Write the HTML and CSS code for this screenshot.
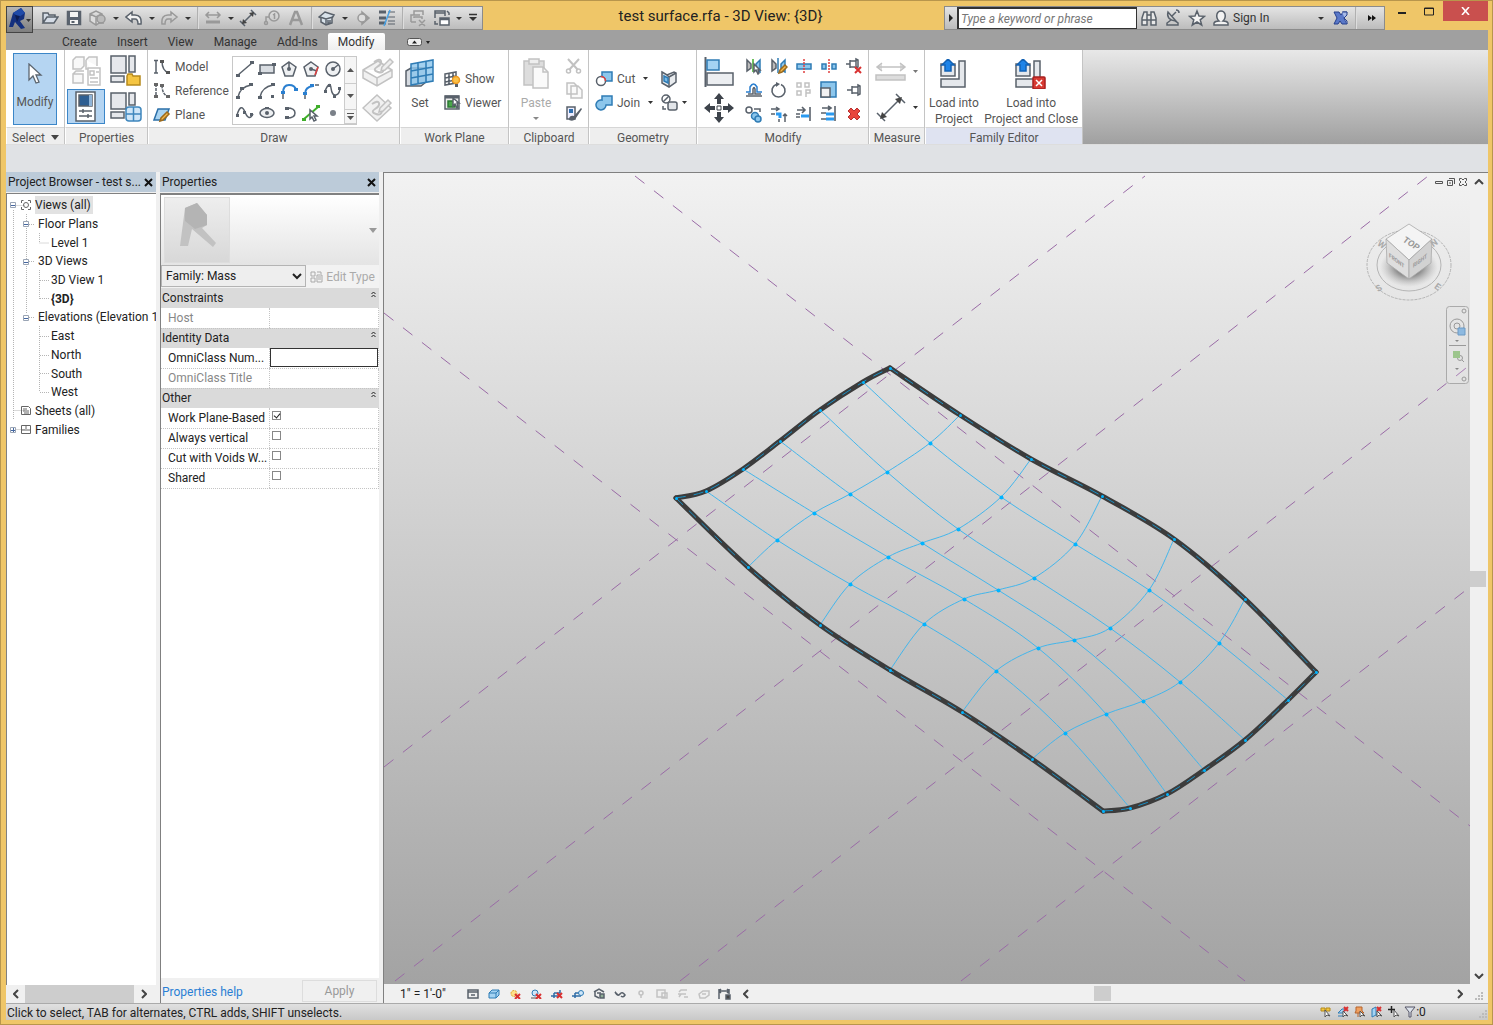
FILE: index.html
```html
<!DOCTYPE html>
<html lang="en">
<head>
<meta charset="utf-8">
<title>test surface.rfa - 3D View: {3D}</title>
<link rel="stylesheet" href="styles.css">
</head>
<body>
<div class="window">

<header class="titlebar">
  <button class="app-button" aria-label="Application menu">
    <svg width="27" height="26" viewBox="0 0 27 26"><path d="M3 20 7 6l8-5 4 5-1 6-4 2 5 7-4 1-6-7-2 5z" fill="#14307e"/><path d="M7 6l8-5 4 5-6 4z" fill="#1f4aa8"/><path d="M9 8l5 1-3 6z" fill="#0c1c52"/><path d="M20 12h5l-2.500 3z" fill="#333"/></svg>
  </button>
  <nav class="quick" aria-label="Quick access">
    <button aria-label="Open"><svg class="i" width="18" height="16"><path d="M2 13V3h5l1 2h6v2M2 13l4-6h11l-4 6z" fill="#d5dce6"/></svg></button>
    <button aria-label="Save"><svg class="i" width="16" height="16"><path d="M1.500 1.500h13v13h-13z" fill="#5b6470"/><path d="M4 2h8v5H4zM4 10h8v4H4z" fill="#f4f4f4" stroke="none"/><path d="M5.500 12h3" stroke-width="2"/></svg></button>
    <button aria-label="Synchronize"><svg class="i dim" width="18" height="16"><path d="M1 4l6-3 6 3v7l-6 4-6-4zM1 4l6 3 6-3M7 7v8" fill="#ddd"/><circle cx="12" cy="9" r="4" fill="#bbb"/><path d="M9 13h6"/></svg></button>
    <button class="caret" aria-label="Sync options"></button>
    <button aria-label="Undo"><svg class="i" width="18" height="16"><path d="M7 2 1 7l6 5V9h3q3 0 3 5h3q1-9-6-9H7z" fill="#f2f2f2"/></svg></button>
    <button class="caret" aria-label="Undo list"></button>
    <button aria-label="Redo"><svg class="i dim" width="18" height="16"><path d="M10 2l6 5-6 5V9H7q-3 0-3 5H1Q0 5 7 5h3z"/></svg></button>
    <button class="caret" aria-label="Redo list"></button>
    <i class="sep"></i>
    <button aria-label="Measure"><svg class="i dim" width="18" height="14"><path d="M2 4h14M5 1 2 4l3 3M13 1l3 3-3 3"/><path d="M2 11h14" stroke-width="3"/></svg></button>
    <button class="caret" aria-label="Measure options"></button>
    <button aria-label="Aligned dimension"><svg class="i" width="18" height="18"><path d="M3 15 15 3M1 12l5 5M12 1l5 5"/><path d="M3 15l1-5 4 4zM15 3l-5 1 4 4z" fill="#444" stroke="none"/></svg></button>
    <button aria-label="Tag"><svg class="i dim" width="18" height="16"><circle cx="11" cy="6" r="5"/><path d="M10 5l1.500-1v5M6 7H3v5"/><circle cx="3" cy="13" r="1.500"/></svg></button>
    <button aria-label="Text"><svg class="i dim" width="16" height="16"><path d="M2 15 7 2h2l5 13M4 10h8" stroke-width="2.500"/></svg></button>
    <i class="sep"></i>
    <button aria-label="Default 3D view"><svg class="i" width="18" height="16"><path d="M1 7l6-5 9 3-2 3v5l-6 2-5-3V8z" fill="#d8e2ea"/><path d="M2 7l6 2 7-2M8 9v6M10 10v4l2-1v-3"/></svg></button>
    <button class="caret" aria-label="3D view options"></button>
    <button aria-label="Section"><svg class="i dim" width="16" height="16"><path d="M7 2l7 6-7 6z" fill="#999"/><circle cx="7" cy="8" r="4" fill="#ddd"/></svg></button>
    <button aria-label="Thin lines"><svg class="i" width="18" height="18"><path d="M1 3h7M1 9h7M1 14h7" stroke-width="3"/><path d="M10 3h7M10 8h7M10 12h7M10 15h7" stroke-width="1"/><path d="M6 17 12 1" stroke="#4aa3e6"/></svg></button>
    <i class="sep"></i>
    <button aria-label="Close hidden windows"><svg class="i dim" width="18" height="18"><path d="M5 6V2h9v4M2 13V6h9M2 13h5M5 9V8h8v2M10 11l6 6M16 11l-6 6"/></svg></button>
    <button aria-label="Switch windows"><svg class="i" width="18" height="18"><path d="M2 9V2h10v5M2 4h10" /><path d="M7 9h9v7H7zM7 10.500h9" fill="#fff"/><path d="M14 2l2 2v2M2 12v3h3"/></svg></button>
    <button class="caret narrow" aria-label="Window list"></button>
    <button class="more" aria-label="Customize"><svg width="10" height="10"><path d="M1 1.500h8" stroke="#333" stroke-width="1.500"/><path d="M1 4h8l-4 4z" fill="#333"/></svg></button>
  </nav>
  <h1 class="title">test surface.rfa - 3D View: {3D}</h1>
  <div class="info">
    <button class="info-arrow" aria-label="Collapse search"><svg width="6" height="8"><path d="M1 0l4 4-4 4z" fill="#222"/></svg></button>
    <input type="search" aria-label="Search help" placeholder="Type a keyword or phrase">
    <button aria-label="Search"><svg class="i" width="18" height="18"><path d="M2 16V9l2-6h3v13zM16 16V9l-2-6h-3v13zM7 6h4v5H7M2 11h5M11 11h5" fill="#e8e8e8"/></svg></button>
    <button aria-label="Communication center"><svg class="i" width="18" height="18"><path d="M4 3q-2 8 8 9zM8 7l4-4M7 11l-4 3v2h11v-2l-3-2M12 1q3 0 3 3"/></svg></button>
    <button aria-label="Favorites"><svg class="i" width="18" height="18"><path d="M9 2l2 5 5.500.3-4.300 3.500 1.500 5.200L9 13l-4.700 3 1.500-5.200L1.500 7.300 7 7z" fill="#f4f4f4"/></svg></button>
    <button aria-label="Account"><svg class="i" width="18" height="18"><path d="M2 16v-2q1-2 5-2-3-3-2-7 1-3 4-3t4 3q1 4-2 7 4 0 5 2v2z" fill="#f2f2f2"/></svg></button>
    <button class="sign">Sign In</button>
    <button class="caret" aria-label="Sign in options"></button>
    <button class="xch" aria-label="Exchange apps"><svg width="18" height="16"><path d="M2 2h5l2 3 2-3h4l-3 6 3 6h-5l-2-3-2 3H2l3-6z" fill="#5a78c8" stroke="#27408c"/><path d="M10 2h5v3l-3 3 3 3v3" fill="#a9bbe6" stroke="#27408c"/></svg></button>
    <i class="sep"></i>
    <button aria-label="Help"><svg width="8" height="8"><path d="M0 1l4 3-4 3zM4 1l4 3-4 3z" fill="#111"/></svg></button>
  </div>
  <div class="winbtns">
    <button aria-label="Minimize"><svg width="9" height="4"><path d="M0 2h8v2H0z" fill="#222"/></svg></button>
    <button aria-label="Maximize"><svg width="11" height="9"><path d="M.5 1h9v7h-9zM0 1.500h10" fill="none" stroke="#222"/></svg></button>
    <button class="close" aria-label="Close"><svg width="9" height="8"><path d="M1 0l7 8M8 0 1 8" stroke="#fff" stroke-width="1.600"/></svg></button>
  </div>
</header>

<nav class="tabs" aria-label="Ribbon tabs">
  <button>Create</button><button>Insert</button><button>View</button><button>Manage</button><button>Add-Ins</button><button class="on">Modify</button>
  <button class="cycle" aria-label="Minimize ribbon"><svg width="24" height="10"><rect x=".5" y="1.500" width="14" height="7" rx="2" fill="#eee" stroke="#555"/><path d="M5 6.500h5l-2.500-3zM19 4h4l-2 3z" fill="#222"/></svg></button>
</nav>

<section class="ribbon">
  <div class="panel w-select">
    <div class="body"><button class="modify-btn"><svg width="16" height="22"><path d="M2 1v16l4-4 3 7 3-1-3-7h5z" fill="#fff" stroke="#5c6670" stroke-width="1.300"/></svg>Modify</button></div>
    <button class="cap">Select <svg width="8" height="6"><path d="M0 0h8L4 5z" fill="#444"/></svg></button>
  </div>
  <div class="panel w-props">
    <div class="body props-grid">
      <button aria-label="Type properties"><svg class="i faint" width="32" height="30"><path d="M2 4l3-3h8v9l-3 3H2zM15 4l3-3h8v9M15 4v9h4M2 18l3-3h8M2 18v9h10v-9z" fill="#f8f8f8"/><path d="M17 12h12v17H17z" fill="#fff"/><path d="M19 15h4v4h-4zM19 22h8M19 26h8M25 16h3"/></svg></button>
      <button aria-label="Family category"><svg class="i" width="32" height="32"><path d="M1 1h15v17H1zM19 1h6v16h-6zM1 21h13v6H1z" fill="#e6e8ec"/><path d="M17 21l1-2h4l1 2h7v9H17z" fill="#f5c542" stroke="#b78a1d"/></svg></button>
      <button class="sel" aria-label="Properties"><svg class="i" width="24" height="32"><path d="M2 1h19v29H2z" fill="#fff"/><path d="M5 4h13v11H5z" fill="#2f5f92"/><path d="M15 4h3v11h-3z" fill="#8fb4d8" stroke="none"/><path d="M5 20h13M5 25h13M9 18v4M14 23v4"/></svg></button>
      <button aria-label="Family types"><svg class="i" width="32" height="32"><path d="M1 2h15v16H1zM19 2h6v12h-6zM1 21h13v6H1z" fill="#e6e8ec"/><rect x="16" y="16" width="15" height="14" rx="3" fill="#cfe6f8" stroke="#3f87bd"/><path d="M23.500 16v14M16 23h15" stroke="#3f87bd"/></svg></button>
    </div>
    <div class="cap">Properties</div>
  </div>
  <div class="panel w-draw">
    <div class="body draw">
      <div class="modes">
        <button><svg class="i" width="18" height="16"><path d="M3 1v13M1 1.500h4M1 14h4M9 2q0 10 7 12"/><path d="M7 1h4v3H7zM13 12h4v3h-4z" fill="#555" stroke="none"/></svg>Model</button>
        <button><svg class="i" width="18" height="16"><path d="M3 1v13M9 2q0 10 7 12" stroke-dasharray="3 1"/><path d="M1 0h4v3H1zM1 12h4v3H1zM7 1h4v3H7zM13 12h4v3h-4z" fill="#666" stroke="none"/></svg>Reference</button>
        <button><svg class="i" width="18" height="16"><path d="M5 2h11l-4 11H1z" fill="#a9d4f2" stroke="#2b6fa8"/><path d="M7 14l1-3 6-6 2 2-6 6z" fill="#f3b94d" stroke="#9c6a1c"/></svg>Plane</button>
      </div>
      <div class="gallery">
        <div class="shapes">
          <button aria-label="Line"><svg class="i" width="18" height="18"><path d="M2 15 16 3"/><path d="M0 14h4v3H0zM14 1h4v3h-4z" class="f"/></svg></button>
          <button aria-label="Rectangle"><svg class="i" width="18" height="18"><path d="M2 5h14v8H2z" fill="#d9dde2"/><path d="M0 12h4v3H0zM14 3h4v3h-4z" class="f"/></svg></button>
          <button aria-label="Inscribed polygon"><svg class="i" width="18" height="18"><path d="M9 2l7 5-3 9H5L2 7zM9 2v7" fill="#eef0f2"/><circle cx="9" cy="9" r="2" class="f"/></svg></button>
          <button aria-label="Circumscribed polygon"><svg class="i" width="18" height="18"><path d="M9 2l7 5-3 9H5L2 7z" fill="#eef0f2"/><path d="M9 9l6 2" /><path d="M16 7l-3 8" stroke="#e04040"/><circle cx="9" cy="9" r="2" class="f"/></svg></button>
          <button aria-label="Circle"><svg class="i" width="18" height="18"><circle cx="9" cy="9" r="7" fill="#eef0f2"/><path d="M9 9l5-4"/><circle cx="9" cy="9" r="2" class="f"/></svg></button>
          <button aria-label="Start-end-radius arc"><svg class="i" width="18" height="18"><path d="M2 15Q4 5 15 3"/><path d="M0 14h4v3H0zM4 5h4v3H4zM13 1h4v3h-4z" class="f"/></svg></button>
          <button aria-label="Center-ends arc"><svg class="i" width="18" height="18"><path d="M2 15Q4 5 15 3"/><path d="M0 14h4v3H0zM13 1h4v3h-4zM13 13h3v3h-3z" class="f"/></svg></button>
          <button aria-label="Tangent end arc"><svg class="i" width="18" height="18"><path d="M3 11Q3 3 9 3t7 5" stroke="#2a7fd0" stroke-width="2"/><path d="M3 12v5"/><path d="M14 6h4v3h-4zM1 9h4v3H1z" fill="#2a7fd0" stroke="none"/></svg></button>
          <button aria-label="Fillet arc"><svg class="i" width="18" height="18"><path d="M3 12Q3 5 11 4" stroke="#2a7fd0" stroke-width="2"/><path d="M3 13v4M13 3h4"/><path d="M1 10h4v3H1zM8 2h4v3H8z" fill="#2a7fd0" stroke="none"/></svg></button>
          <button aria-label="Spline"><svg class="i" width="18" height="18"><path d="M1 9Q6-2 7 6t5 7 4-8"/><path d="M0 8h3v3H0zM4 2h3v3H4zM9 13h3v3H9zM14 5h3v3h-3z" class="f"/></svg></button>
          <button aria-label="Spline through points"><svg class="i" width="18" height="18"><path d="M1 11q4-13 8-3t8 2"/><path d="M0 10h3v3H0zM7 7h3v3H7zM14 9h3v3h-3z" class="f"/></svg></button>
          <button aria-label="Ellipse"><svg class="i" width="18" height="18"><ellipse cx="9" cy="9" rx="7" ry="4.500" fill="#eef0f2"/><circle cx="9" cy="9" r="2" class="f"/><path d="M7 3h4v2H7z" class="f"/></svg></button>
          <button aria-label="Partial ellipse"><svg class="i" width="18" height="18"><path d="M7 4q8 0 8 5t-8 5"/><path d="M5 3h4v3H5zM5 12h4v3H5z" class="f"/></svg></button>
          <button aria-label="Pick lines"><svg class="i" width="18" height="18"><path d="M2 15 16 3" stroke="#3fae2a" stroke-width="2"/><path d="M0 14h4v3H0zM14 1h4v3h-4z" fill="#3fae2a" stroke="none"/><path d="M8 6v9l2-2 2 4 2-1-2-4h3z" fill="#fff"/></svg></button>
          <button aria-label="Point"><svg class="i" width="18" height="18"><circle cx="9" cy="9" r="3" fill="#7a8088" stroke="none"/></svg></button>
        </div>
        <div class="gscroll">
          <button aria-label="Scroll up"><svg width="7" height="4"><path d="M0 4h7L3.500 0z" fill="#555"/></svg></button>
          <button aria-label="Scroll down"><svg width="7" height="4"><path d="M0 0h7L3.500 4z" fill="#555"/></svg></button>
          <button aria-label="Expand gallery"><svg width="7" height="7"><path d="M0 .5h7" stroke="#555"/><path d="M0 3h7L3.500 7z" fill="#555"/></svg></button>
        </div>
      </div>
      <div class="col2">
        <button aria-label="Draw on face"><svg class="i faint" width="32" height="30"><path d="M1 13 16 4l14 9v7l-15 9-14-8zM1 13l14 8 15-8M15 21v8" fill="#f1f1f1"/><path d="M12 5q6-4 7-1t-4 6 1 5 6-4" stroke-width="2"/><path d="M20 10l8-8 3 3-8 8-4 1z" fill="#eee"/></svg></button>
        <button aria-label="Draw on work plane"><svg class="i faint" width="32" height="30"><path d="M1 15 15 2l14 13-14 13z" fill="#f1f1f1"/><path d="M10 11q6-4 7-1t-4 6 1 5 6-4" stroke-width="2"/><path d="M18 15l8-8 3 3-8 8-4 1z" fill="#eee"/></svg></button>
      </div>
    </div>
    <div class="cap">Draw</div>
  </div>
  <div class="panel w-plane">
    <div class="body plane">
      <button class="big"><svg class="i" width="30" height="30"><path d="M1 12l5-3h15v14l-5 4H1z" fill="#d6dbe1"/><path d="M6 5l22-4v21L6 26zM6 12l22-4M6 19l22-4M13 4v21M21 2v21" fill="#8cc6ec" fill-opacity=".8" stroke="#2f7cb5"/></svg>Set</button>
      <div class="stack">
        <button><svg class="i" width="18" height="18"><path d="M2 4l11-2v11L2 15zM2 8l11-2M2 12l11-2M6 3v11M10 2v11"/><circle cx="13" cy="10" r="3.500" fill="#fbc24a" stroke="#ee9a20"/><path d="M12 14h3v3h-3z" class="f"/></svg>Show</button>
        <button><svg class="i" width="18" height="18"><path d="M2 2h14v13H2z" fill="#eee"/><path d="M2 3h14" stroke-width="3"/><path d="M5 7h7v6H5z" fill="#4aa64a" stroke="#2b7a33"/><path d="M10 4v8l2-2 2 4 1-1-1-4h2z" fill="#fff"/></svg>Viewer</button>
      </div>
    </div>
    <div class="cap">Work Plane</div>
  </div>
  <div class="panel w-clip">
    <div class="body clip">
      <button class="big off"><svg class="i faint" width="28" height="32"><path d="M2 4h20v24H2z" fill="#ddd"/><path d="M7 2h10v5H7z" fill="#eee"/><path d="M11 10h10l5 5v16H11z" fill="#fafafa"/><path d="M21 10v5h5"/></svg>Paste<svg width="6" height="4"><path d="M0 0h6L3 3z" fill="#888"/></svg></button>
      <div class="stack3">
        <button aria-label="Cut to clipboard"><svg class="i faint" width="18" height="18"><path d="M3 2l10 11M14 2 4 13" stroke-width="2"/><circle cx="3.500" cy="14" r="2"/><circle cx="13.500" cy="14" r="2"/></svg></button>
        <button aria-label="Copy to clipboard"><svg class="i faint" width="18" height="18"><path d="M2 2h7l3 3v8H2zM6 5h7l4 4v8H6z" fill="#fafafa"/></svg></button>
        <button aria-label="Match type"><svg class="i" width="18" height="18"><path d="M2 2h8v12H2z" fill="#eef"/><path d="M4 4h4v4H4z" fill="#2f6fae" stroke="none"/><path d="M4 15q0-5 5-4l7-8 1 1-6 9q-2 4-7 2z" class="f"/></svg></button>
      </div>
    </div>
    <div class="cap">Clipboard</div>
  </div>
  <div class="panel w-geo">
    <div class="body geo">
      <div class="stack">
        <button><svg class="i" width="18" height="18"><path d="M7 2h10v9H7z" fill="#8cc6ec" stroke="#2f7cb5"/><circle cx="6" cy="11" r="4.500" fill="#fff"/><path d="M6 6.500a4.500 4.500 0 0 1 4.500 4.500" stroke="#e04040"/></svg>Cut<svg class="drop" width="5" height="4"><path d="M0 0h5L2.500 3z" fill="#333"/></svg></button>
        <button><svg class="i" width="18" height="18"><path d="M7 2h10v9h-6a5 5 0 1 1-4-5z" fill="#8cc6ec" stroke="#2f7cb5"/></svg>Join<svg class="drop" width="5" height="4"><path d="M0 0h5L2.500 3z" fill="#333"/></svg></button>
      </div>
      <div class="stack">
        <button aria-label="Split face"><svg class="i" width="18" height="18"><path d="M2 2l5 3 7-3 2 1v9l-7 5-7-4z" fill="#e8ebee"/><path d="M7 5l2 2v9M9 7l7-4"/><path d="M4 6l4 2v5l-4-2z" fill="#79bbe8" stroke="#2f7cb5"/></svg></button>
        <button aria-label="Demolish"><svg class="i" width="18" height="18"><circle cx="6" cy="5" r="4"/><path d="M3 8l6-6M3 12v3h3"/><rect x="8" y="8" width="9" height="8" rx="2" fill="#e2e5e9"/></svg><svg width="5" height="4"><path d="M0 0h5L2.500 3z" fill="#333"/></svg></button>
      </div>
    </div>
    <div class="cap">Geometry</div>
  </div>
  <div class="panel w-mod">
    <div class="body mod">
      <div class="col2">
        <button aria-label="Align"><svg class="i" width="30" height="32"><path d="M1.500 1v30" stroke-width="2"/><path d="M3 4h12v10H3z" fill="#a4d3f3" stroke="#2f7cb5"/><path d="M3 17h26v12H3z" fill="#eceef1"/></svg></button>
        <button aria-label="Move"><svg width="30" height="30"><path d="M15 0l5 6h-3v5h-4V6h-3zM15 30l5-6h-3v-5h-4v5h-3zM0 15l6-5v3h5v4H6v3zM30 15l-6-5v3h-5v4h5v3z" fill="#3d434b"/><path d="M13 13h4v4h-4z" fill="#fff" stroke="#3d434b"/></svg></button>
      </div>
      <div class="tools">
        <button aria-label="Mirror - pick axis"><svg class="i" width="18" height="18"><path d="M2 3l4 4v4l-4 3z" fill="#bbb"/><path d="M8 2v13" stroke="#3fae2a"/><path d="M15 3l-4 4v6l4 2z" fill="#8cc6ec" stroke="#2f7cb5"/><path d="M9 7v8l2-2 2 4 1-1-1-3h2z" fill="#fff"/></svg></button>
        <button aria-label="Mirror - draw axis"><svg class="i" width="18" height="18"><path d="M2 3l4 4v4l-4 3z" fill="#bbb"/><path d="M8 1v15" stroke="#2f7cb5"/><path d="M15 3l-4 4v6l4 2z" fill="#8cc6ec" stroke="#2f7cb5"/><path d="M9 16l1-3 5-5 2 2-5 5z" fill="#f3b94d" stroke="#9c6a1c"/></svg></button>
        <button aria-label="Split element"><svg class="i" width="18" height="18"><path d="M2 7h14v5H2z" fill="#8cc6ec" stroke="#2f7cb5"/><path d="M9 2v15" stroke="#e04040" stroke-dasharray="2 1"/></svg></button>
        <button aria-label="Split with gap"><svg class="i" width="18" height="18"><path d="M2 7h4v5H2zM12 7h4v5h-4z" fill="#8cc6ec" stroke="#2f7cb5"/><path d="M9 2v15" stroke="#e04040" stroke-dasharray="2 1"/></svg></button>
        <button aria-label="Unpin"><svg class="i" width="18" height="18"><path d="M1 7h4M5 3v8M5 4h6M5 10h5M11 2l2 1v7l-2 1z"/><path d="M10 10l6 6M16 10l-6 6" stroke="#d93030" stroke-width="2"/></svg></button>
        <button aria-label="Offset"><svg class="i" width="18" height="18"><path d="M1 11h4V6q3.500-6 7 0v5h5" stroke="#2a7fd0"/><path d="M1 15h16M3 13h5V8q1-3 2 0v5h6"/></svg></button>
        <button aria-label="Rotate"><svg class="i" width="18" height="18"><path d="M6 3.500a6.500 6.500 0 1 0 5 0" stroke-width="1.600"/><path d="M6 1v5l4-3z" class="f"/></svg></button>
        <button aria-label="Array"><svg class="i faint" width="18" height="18"><path d="M2 2h4v4H2zM10 2h4v4h-4zM2 10h4v4H2zM11 9h4v3h-4zM11 9v7"/></svg></button>
        <button aria-label="Scale"><svg class="i" width="18" height="18"><path d="M1 1h15v15H1z" fill="#8cc6ec" stroke="#2f7cb5"/><path d="M1 7h9v9H1z" fill="#f2f2f2"/></svg></button>
        <button aria-label="Pin"><svg class="i" width="18" height="18"><path d="M2 9h5M7 5v8M7 6h6M7 12h6M13 4l2 1v8l-2 1z"/></svg></button>
        <button aria-label="Copy"><svg class="i" width="18" height="18"><circle cx="4" cy="5" r="3"/><path d="M9 4h6v3"/><circle cx="10" cy="11" r="3.500" fill="#8cc6ec" stroke="#2f7cb5"/><circle cx="13" cy="14" r="3" fill="#8cc6ec" stroke="#2f7cb5"/></svg></button>
        <button aria-label="Trim to corner"><svg class="i" width="18" height="18"><path d="M1 4h8M6 2l3 2-3 2M15 17V9M13 11l2-2 2 2M1 9h4M9 17v-3"/><path d="M6 9h4v4" stroke="#2a9af0" stroke-width="3"/></svg></button>
        <button aria-label="Trim single"><svg class="i" width="18" height="18"><path d="M2 5h8M7 2l3 3-3 3M15 2v14M1 9h4M1 12h4" stroke-width="1.600"/><path d="M6 11h8" stroke="#2a9af0" stroke-width="3"/></svg></button>
        <button aria-label="Trim multiple"><svg class="i" width="18" height="18"><path d="M2 3h8M8 1l3 2-3 2M15 1v15M1 8h5M1 14h5" stroke-width="1.600"/><path d="M6 9h8M6 14h8" stroke="#2a9af0" stroke-width="3"/></svg></button>
        <button aria-label="Delete"><svg width="16" height="16"><path d="M2 5l3-3 3 3 3-3 3 3-3 3 3 3-3 3-3-3-3 3-3-3 3-3z" fill="#e8453c" stroke="#b83030"/></svg></button>
      </div>
    </div>
    <div class="cap">Modify</div>
  </div>
  <div class="panel w-meas">
    <div class="body meas">
      <button aria-label="Measure between"><svg class="i faint" width="32" height="20"><path d="M2 5h28M7 1 2 5l5 4M25 1l5 4-5 4M1 13h29v5H1z" fill="#ddd"/></svg><svg width="5" height="4"><path d="M0 0h5L2.500 3z" fill="#777"/></svg></button>
      <button aria-label="Aligned dimension"><svg class="i" width="32" height="30"><path d="M6 25 26 5M2 20l8 8M21 1l9 9"/><path d="M5 26l2-7 5 5zM27 4l-7 2 5 5z" fill="#444" stroke="none"/></svg><svg width="5" height="4"><path d="M0 0h5L2.500 3z" fill="#333"/></svg></button>
    </div>
    <div class="cap">Measure</div>
  </div>
  <div class="panel w-fam">
    <div class="body fam">
      <button class="big"><svg class="i" width="28" height="30"><path d="M1 20h18V2h6v26H1zM1 5h14v12H1z" fill="#e5e8ec"/><path d="M8 0l6 6h-3v6H5V6H2z" fill="#1e84e8" stroke="#1362b4"/></svg>Load into<br>Project</button>
      <button class="big"><svg class="i" width="32" height="30"><path d="M1 20h18V2h6v26H1zM1 5h14v12H1z" fill="#e5e8ec"/><path d="M8 0l6 6h-3v6H5V6H2z" fill="#1e84e8" stroke="#1362b4"/><rect x="18" y="18" width="12" height="12" rx="1" fill="#d83a32" stroke="#a81f1f"/><path d="M21 21l6 6M27 21l-6 6" stroke="#fff"/></svg>Load into<br>Project and Close</button>
    </div>
    <div class="cap">Family Editor</div>
  </div>
</section>
<div class="options"></div>

<main class="work">
  <aside class="dock browser">
    <header><h2>Project Browser - test s...</h2><button aria-label="Close project browser"><svg width="9" height="9"><path d="M1 1l7 7M8 1 1 8" stroke="#111" stroke-width="2"/></svg></button></header>
    <div class="tree-wrap">
      <svg class="lines" width="149" height="243">
        <g fill="none" stroke="#b5b5b5" stroke-dasharray="1 1"><path d="M6.500 14v210M6.500 9.500h12M19.500 18v100M20 28.500h8M20 65.500h8M20 121.500h8M32.500 37v10h9M32.500 74v29M33 84.500h9M33 102.500h9M32.500 130v66M33 140.500h9M33 159.500h9M33 177.500h9M33 196.500h9M6.500 214.500h12M6.500 233.500h12"/></g>
        <g fill="#fff" stroke="#9aa5b5"><path d="M3.500 6.500h5v5h-5zM16.500 25.500h5v5h-5zM16.500 63.500h5v5h-5zM16.500 119.500h5v5h-5zM3.500 231.500h5v5h-5z"/><path d="M4 9.500h4M17 28.500h4M17 66.500h4M17 122.500h4M4 234.500h4M6.500 232v4" stroke="#4466a0"/></g>
        <g fill="none" stroke="#666"><path d="M14.500 7V4.500h2M21 4.500h2.500V7M23.500 11v2.500H21M17 13.500h-2.500V11"/><circle cx="19" cy="9" r="2.500"/><path d="M14.500 210.500h7l2 2v6h-9zM16 213h4M16 215h6M17 217h5M14.500 229.500h9v8h-9zM19 229v4M14 234h9"/></g>
      </svg>
      <ul class="tree">
        <li><span class="cur">Views (all)</span></li><li class="l1">Floor Plans</li><li class="l2">Level 1</li><li class="l1">3D Views</li><li class="l2">3D View 1</li><li class="l2"><b>{3D}</b></li><li class="l1">Elevations (Elevation 1</li><li class="l2">East</li><li class="l2">North</li><li class="l2">South</li><li class="l2">West</li><li>Sheets (all)</li><li>Families</li>
      </ul>
    </div>
    <div class="hscroll"><button aria-label="Scroll left"><svg class="ar" width="6" height="10"><path d="M5 1 1 5l4 4"/></svg></button><i class="thumb"></i><button aria-label="Scroll right"><svg class="ar" width="6" height="10"><path d="M1 1l4 4-4 4"/></svg></button></div>
  </aside>

  <aside class="dock props">
    <header><h2>Properties</h2><button aria-label="Close properties"><svg width="9" height="9"><path d="M1 1l7 7M8 1 1 8" stroke="#111" stroke-width="2"/></svg></button></header>
    <div class="props-body">
      <div class="type">
        <svg class="preview" width="66" height="66"><path d="M20 10 32 5l10 12v10l-5 3 14 15-3 4-21-18-4 17h-8z" fill="#c2c2c2"/><path d="M20 10 32 5l10 12v10l-12 4-10-8z" fill="#b4b4b4"/></svg>
        <svg width="8" height="5"><path d="M0 0h8L4 5z" fill="#999"/></svg>
      </div>
      <div class="filter">
        <select aria-label="Type filter"><option>Family: Mass</option></select>
        <button class="edit" disabled><svg width="13" height="12"><path d="M1 1h4v4H1zM1 7h4v4H1zM7 1h4v2M7 4h5v7H7zM8 6h3M8 8h3" fill="none" stroke="#aaa"/></svg>Edit Type</button>
      </div>
      <table>
        <tr class="grp"><th colspan="2">Constraints<svg width="5" height="7"><path d="M.5 3l2-2 2 2M.5 6l2-2 2 2"/></svg></th></tr>
        <tr class="off"><td>Host</td><td></td></tr>
        <tr class="grp"><th colspan="2">Identity Data<svg width="5" height="7"><path d="M.5 3l2-2 2 2M.5 6l2-2 2 2"/></svg></th></tr>
        <tr><td><label for="omni">OmniClass Num...</label></td><td class="edit-cell"><input id="omni" type="text"></td></tr>
        <tr class="off"><td>OmniClass Title</td><td></td></tr>
        <tr class="grp"><th colspan="2">Other<svg width="5" height="7"><path d="M.5 3l2-2 2 2M.5 6l2-2 2 2"/></svg></th></tr>
        <tr><td><label for="c1">Work Plane-Based</label></td><td><input id="c1" type="checkbox" checked></td></tr>
        <tr><td><label for="c2">Always vertical</label></td><td><input id="c2" type="checkbox"></td></tr>
        <tr><td><label for="c3">Cut with Voids W...</label></td><td><input id="c3" type="checkbox"></td></tr>
        <tr><td><label for="c4">Shared</label></td><td><input id="c4" type="checkbox"></td></tr>
      </table>
    </div>
    <footer><a href="#">Properties help</a><button disabled>Apply</button></footer>
  </aside>

  <section class="view">
    <div class="canvas">
      <svg class="scene" viewBox="384 173 1086 811" preserveAspectRatio="xMidYMid slice">
        <g class="planes">
          <path d="M635 176 1470 826M384 313 1245 981M384 767 676 540 1145 176M395 981 820 651 1432 173M680 981 961 762 1470 365M961 981 1103 871 1470 587"/>
        </g>
        <g id="surface"></g>
      </svg>
      <div class="viewwin">
        <button aria-label="Minimize view"><svg width="10" height="10"><path d="M1.500 4.500h7v2h-7z"/></svg></button>
        <button aria-label="Restore view"><svg width="10" height="10"><path d="M1.500 3.500h5v5h-5zM3 1.500h5.500V7M3 6h2"/></svg></button>
        <button aria-label="Close view"><svg width="10" height="10"><path d="M1.500 1.500h2L5 3l1.500-1.500h2v2L7 5l1.500 1.500v2h-2L5 7 3.500 8.500h-2v-2L3 5 1.500 3.500z"/></svg></button>
      </div>
      <svg class="cube" width="88" height="80" viewBox="1365 223 88 80">
        <defs><radialGradient id="sh"><stop offset=".4" stop-color="#666" stop-opacity=".8"/><stop offset="1" stop-color="#aaa" stop-opacity="0"/></radialGradient></defs>
        <g fill="none" stroke="#b5b5b5"><ellipse cx="1409" cy="265" rx="42" ry="35" stroke-dasharray="3 1"/><ellipse cx="1409" cy="265" rx="32" ry="26"/></g>
        <ellipse cx="1409" cy="267" rx="29" ry="20" fill="url(#sh)"/>
        <g stroke="#aaa" stroke-width=".8"><path d="M1409 224l23 15-23 21-23-21z" fill="#f4f4f4"/><path d="M1386 239l23 21v19l-22-16z" fill="#dedede"/><path d="M1432 239l-23 21v19l22-16z" fill="#d2d2d2"/></g>
        <g class="cubetext"><text transform="matrix(.85 .55 -.6 .75 1402 241)">TOP</text><text class="s" transform="matrix(.8 .6 0 1 1389 257)">FRONT</text><text class="s" transform="matrix(.8 -.6 0 1 1413 268)">RIGHT</text>
        <text class="c" transform="rotate(35 1378 243)" x="1378" y="245">W</text><text class="c" transform="rotate(-35 1434 243)" x="1431" y="246">N</text><text class="c" transform="rotate(-35 1379 288)" x="1376" y="291">S</text><text class="c" transform="rotate(35 1438 287)" x="1435" y="290">E</text></g>
      </svg>
      <svg class="navbar" width="23" height="78">
        <rect x=".5" y=".5" width="22" height="77" rx="3" fill="#e4e4e4" fill-opacity=".7" stroke="#aaa"/>
        <g fill="none" stroke="#999"><circle cx="18" cy="5" r="2"/><circle cx="18" cy="73" r="2"/><circle cx="11" cy="20" r="7"/><circle cx="11" cy="20" r="3"/><path d="M3 39.500h17"/><circle cx="14" cy="52" r="2.500"/><path d="M16 54l2 2"/></g>
        <path d="M12 22h7v7h-7z" fill="#8db9e0" stroke="#6d9ac4"/><path d="M7 45h7v7H7z" fill="#9cc58c"/><path d="M9 34h4l-2 2zM9 62h4l-2 2z" fill="#888"/><path d="M10 70l10-8" stroke="#b08abb"/>
      </svg>
    </div>
    <div class="vscroll"><button aria-label="Scroll up"><svg class="ar" width="10" height="6"><path d="M1 5l4-4 4 4"/></svg></button><i class="thumb"></i><button aria-label="Scroll down"><svg class="ar" width="10" height="6"><path d="M1 1l4 4 4-4"/></svg></button></div>
    <div class="vcb">
      <button class="scale">1" = 1'-0"</button>
      <button aria-label="Detail level"><svg class="i" width="12" height="10"><path d="M1 1h10v8H1zM1 3h10M4 6h4"/></svg></button>
      <button aria-label="Visual style"><svg width="12" height="10"><path d="M1 4l3-3h7v5L8 9H1zM1 4h7v5M8 4l3-3" fill="#a4d3f3" stroke="#2f7cb5"/></svg></button>
      <button aria-label="Sun path"><svg width="12" height="10"><circle cx="5" cy="4.500" r="3" fill="#fde08a" stroke="#e0a020" stroke-dasharray="2 1"/><path d="M6 5l5 5M11 5l-5 5" class="x"/></svg></button>
      <button aria-label="Shadows"><svg width="12" height="10"><circle cx="5" cy="4" r="3" fill="#cfe6f8" stroke="#2f7cb5"/><path d="M1 9h6" stroke="#555"/><path d="M6 5l5 5M11 5l-5 5" class="x"/></svg></button>
      <button aria-label="Crop view"><svg width="12" height="10"><path d="M0 7h8M3 4v5M3 4h6V1" fill="none" stroke="#2f6ca5" stroke-width="1.500"/><path d="M6 4l5 5M11 4l-5 5" class="x"/></svg></button>
      <button aria-label="Show crop region"><svg width="12" height="10"><path d="M0 7h9M3 4v5M3 4h4" fill="none" stroke="#2f6ca5" stroke-width="1.500"/><circle cx="9" cy="4" r="2.500" fill="#cfe6f8" stroke="#2f7cb5"/></svg></button>
      <button aria-label="Locked 3D view"><svg class="i" width="12" height="11"><path d="M1 4l5-3 5 3M2 4v4l4 2M4 5h4"/><path d="M7 6h4v4H7z" fill="#8fae96"/></svg></button>
      <button aria-label="Temporary hide"><svg class="i" width="12" height="10"><path d="M1 3q3 5 5 2t5 1q-2 3-4 1M1 3l3 3"/></svg></button>
      <button aria-label="Reveal hidden"><svg class="i faint" width="12" height="10"><circle cx="6" cy="4" r="2"/><path d="M6 6v3"/></svg></button>
      <button aria-label="View properties"><svg class="i faint" width="12" height="10"><path d="M1 1h8v7H1zM6 4h5v5H6z"/></svg></button>
      <button aria-label="Analytical model"><svg class="i faint" width="12" height="10"><path d="M2 3l2-2h6M1 5h8M2 8l2-3M7 8h4"/></svg></button>
      <button aria-label="Displacement"><svg class="i faint" width="12" height="10"><path d="M1 5l4-3h6v4L7 9H2zM4 5h4"/></svg></button>
      <button aria-label="Constraints"><svg class="i" width="13" height="12"><path d="M1 1v10M11 1v5M1 3h10M3 1 1 3l2 2M9 1l2 2-2 2"/><path d="M8 7h4v4H8z" fill="#444"/></svg></button>
      <button aria-label="Scroll left"><svg class="ar" width="6" height="10"><path d="M5 1 1 5l4 4"/></svg></button>
      <div class="track"><i class="thumb"></i></div>
      <button aria-label="Scroll right"><svg class="ar" width="6" height="10"><path d="M1 1l4 4-4 4"/></svg></button>
    </div>
    <div class="grip"><svg width="8" height="8"><path d="M6 0h2v2H6zM3 3h2v2H3zM6 3h2v2H6zM0 6h2v2H0zM3 6h2v2H3zM6 6h2v2H6z" fill="#bbb"/></svg></div>
  </section>
</main>

<footer class="status">
  <p>Click to select, TAB for alternates, CTRL adds, SHIFT unselects.</p>
  <div class="toggles">
    <button aria-label="Select links"><svg width="12" height="12"><path d="M1 2h4v3H1zM6 2h4v3H6z" fill="#f3c63e" stroke="#b58a1a"/><path d="M5 4v7l2-2 3 1z" fill="#fff" stroke="#555"/></svg></button>
    <button aria-label="Select underlay"><svg width="12" height="12"><path d="M1 7l4-4h4L6 7zM1 10h5" fill="#a4d3f3" stroke="#2f7cb5"/><path d="M7 1l4 4M11 1 7 5" class="x"/><path d="M6 5v6l2-2 3 1z" fill="#fff" stroke="#555"/></svg></button>
    <button aria-label="Select pinned"><svg width="12" height="12"><path d="M2 1h6v4l2 2H1l1-2zM4 7v4" fill="#f0a060" stroke="#b5622a"/><path d="M6 5v6l2-2 3 1z" fill="#fff" stroke="#555"/></svg></button>
    <button aria-label="Select by face"><svg width="12" height="12"><path d="M1 3l4-2v8l-4 2zM5 9h3" fill="#a4d3f3" stroke="#2f7cb5"/><path d="M6 1l4 4M10 1 6 5" class="x"/><path d="M6 5v6l2-2 3 1z" fill="#fff" stroke="#555"/></svg></button>
    <button aria-label="Drag on selection"><svg width="12" height="12"><path d="M3.500 0v7M0 3.500h7" stroke="#222" stroke-width="1.500"/><path d="M6 4v7l2-2 3 1z" fill="#fff" stroke="#555"/></svg></button>
    <button class="filter-btn"><svg width="12" height="12"><path d="M1 1h10L7 6v5H5V6z" fill="#dde3ec" stroke="#556"/></svg><span>:0</span></button>
    <svg class="corner" width="8" height="8"><path d="M6 0h2v2H6zM3 3h2v2H3zM6 3h2v2H6zM0 6h2v2H0zM3 6h2v2H3zM6 6h2v2H6z" fill="#bbb"/></svg>
  </div>
</footer>
</div>
<script src="surface.js"></script>
</body>
</html>
```

FILE: surface.js
```js
// Nodes of the divided surface: one row per cross curve, left edge to right edge.
const rows = [
  [[676,498],[706,491],[743,469],[780,441],[820,410],[863,382],[890,368]],
  [[748,567],[777,540],[814,513],[850,494],[887,472],[930,443],[960,415]],
  [[820,625],[850,584],[888,557],[922,543],[958,529],[1001,497],[1031,459]],
  [[890,670],[924,624],[964,599],[998,590],[1034,578],[1075,544],[1102,496]],
  [[962,712],[996,671],[1038,648],[1074,640],[1110,628],[1149,590],[1174,539]],
  [[1032,759],[1065,733],[1106,714],[1143,701],[1180,682],[1219,643],[1245,599]],
  [[1103,811],[1130,808],[1167,794],[1204,770],[1245,740],[1288,700],[1316,672]]
];
const columns = rows[0].map((_, j) => rows.map(r => r[j]));

// Smooth path through every point.
function curve(p) {
  let d = `M${p[0]}`;
  for (let i = 0; i < p.length - 1; i++) {
    const a = p[i - 1] || p[i], b = p[i], c = p[i + 1], e = p[i + 2] || c;
    d += `C${b[0] + (c[0] - a[0]) / 6} ${b[1] + (c[1] - a[1]) / 6} ${c[0] - (e[0] - b[0]) / 6} ${c[1] - (e[1] - b[1]) / 6} ${c}`;
  }
  return d;
}
const path = (cls, p) => `<path class="${cls}" d="${curve(p)}"/>`;
const edges = [rows[0], rows[6], columns[0], columns[6]];
let out = '';
for (const p of [...rows.slice(1, 6), ...columns.slice(1, 6)]) out += path('grid', p);
for (const p of edges) out += path('edge', p);
for (const p of edges) out += path('core', p);
rows.forEach((row, i) => row.forEach(([x, y], j) => {
  const inner = i > 0 && i < 6 && j > 0 && j < 6;
  out += `<circle class="node" cx="${x + .5}" cy="${y + .5}" r="${inner ? 2 : 1.5}"/>`;
}));
document.getElementById('surface').innerHTML = out;
```

FILE: styles.css
```css
* { box-sizing: border-box; }
body { margin: 0; font: 12px/16px Roboto, "Open Sans", sans-serif; color: #333; }
button { border: 0; padding: 0; margin: 0; background: none; font: inherit; color: inherit; display: flex; align-items: center; justify-content: center; white-space: nowrap; }
h1, h2, p, ul { margin: 0; padding: 0; font: inherit; }
svg { display: block; flex: none; }
.i { fill: none; stroke: #59616b; stroke-width: 1.5; }
.i .f { fill: #59616b; stroke: none; }
.dim { stroke: #999; }
.faint { stroke: #c2c2c2; }
.x { stroke: #d93030; stroke-width: 2; fill: none; }
.ar { fill: none; stroke: #444; stroke-width: 2; }

.window { height: 100vh; min-height: 600px; display: flex; flex-direction: column; background: #efc668; border: 1px solid #b8964c; padding: 0 4px 4px 5px; }

.titlebar { position: relative; flex: none; height: 29px; display: flex; align-items: flex-start; }
.app-button { position: absolute; left: 0; top: 5px; z-index: 2; width: 27px; height: 27px; border: 1px solid #444; background: linear-gradient(#b5b5b5, #7e7e7e); }
.quick, .info { display: flex; height: 24px; margin-top: 5px; border: 1px solid #8b8b8b; background: linear-gradient(#e4e4e4, #bcbcbc); }
.quick { margin-left: 26px; padding-left: 5px; width: 451px; }
.quick button { width: 24px; }
.sep { width: 1px; margin: 0 3px; background: #b0b0b0; border-right: 1px solid #ddd; box-sizing: content-box; flex: none; }
.quick .sep { margin: 0 2px 0 3px; }
.quick .caret, .info .caret { width: 12px; }
.quick .narrow { width: 10px; }
.quick .more { width: 18px; }
.caret::after { content: ""; border: 3px solid transparent; border-top-color: #333; border-bottom: 0; }
.title { flex: 1; min-width: 0; padding: 6px 0 0 14px; text-align: center; font-size: 15px; line-height: 18px; color: #222; white-space: nowrap; }
.info { width: 441px; }
.info button { width: 24px; }
.info .info-arrow { width: 12px; }
.info input { width: 180px; border: 2px solid #333; border-bottom-width: 1px; border-right-width: 1px; padding: 0 2px; font: italic 12px/16px Roboto, sans-serif; background: #fff; border-radius: 0; }
.info input::placeholder { color: #777; opacity: 1; }
.info .sign { width: 82px; justify-content: flex-start; }
.info .caret { width: 12px; }
.info .xch { width: 28px; }
.info .sep { margin: 0 3px 0 0; }
.winbtns { display: flex; align-items: flex-start; height: 21px; margin-left: 4px; }
.winbtns button { width: 27px; height: 21px; }
.winbtns .close { width: 45px; height: 20px; background: #c9504e; }

.tabs { flex: none; height: 20px; background: #a0a0a0; display: flex; align-items: flex-end; padding-left: 46px; }
.tabs button { height: 17px; padding: 1px 10px 0; color: #333; }
.tabs .on { background: linear-gradient(#fff, #eee); border-radius: 2px 2px 0 0; }
.tabs .cycle { padding: 0 0 0 22px; }

.ribbon { flex: none; height: 95px; display: flex; background: linear-gradient(#e8e8e8, #a0a0a0); color: #555; border-bottom: 1px solid #ddd; }
.panel { flex: none; display: flex; flex-direction: column; background: #fff; border-right: 1px solid #c4c4c4; }
.body { flex: none; height: 77px; display: flex; }
.cap { flex: none; height: 17px; width: auto; background: #eee; border-top: 1px solid #d6d6d6; border-left: 1px solid #fff; padding-top: 3px; display: flex; align-items: center; justify-content: center; gap: 6px; }
.w-select { width: 59px; } .w-props { width: 83px; } .w-draw { width: 252px; } .w-plane { width: 109px; } .w-clip { width: 80px; }
.w-geo { width: 108px; } .w-mod { width: 172px; } .w-meas { width: 56px; } .w-fam { width: 158px; }
.w-fam .cap { background: #dfe3f1; }
.modify-btn { width: 44px; height: 72px; margin: 3px 0 0 7px; border: 1px solid #3b86c8; background: #b5d5f2; flex-direction: column; gap: 9px; padding-bottom: 5px; }
.props-grid { display: grid; grid-template: 36px 36px / 40px 38px; padding: 3px 0 0 2px; align-content: start; }
.props-grid .sel { border: 1px solid #3b86c8; background: #b5d5f2; width: 38px; height: 35px; }
.modes { width: 84px; display: flex; flex-direction: column; padding: 5px 0 0 5px; }
.modes button { height: 24px; justify-content: flex-start; gap: 4px; }
.gallery { width: 125px; height: 69px; margin-top: 6px; border: 1px solid #c8c8c8; display: flex; }
.shapes { flex: 1; display: grid; grid-template: repeat(3, 22px) / repeat(5, 22px); padding: 1px 0 0 1px; }
.gscroll { width: 13px; border-left: 1px solid #ccc; display: grid; grid-template-rows: 1fr 1fr 14px; background: #f5f5f5; }
.gscroll button { width: auto; border-bottom: 1px solid #ccc; }
.col2 { display: grid; grid-template-rows: 36px 36px; padding-top: 4px; width: 41px; justify-items: center; }
.big { flex-direction: column; line-height: 16px; padding-top: 9px; justify-content: flex-start; text-align: center; gap: 6px; }
.stack { display: flex; flex-direction: column; padding-top: 17px; }
.stack button { height: 24px; justify-content: flex-start; gap: 4px; }
.plane .big { width: 40px; }
.plane .stack { margin-left: 3px; }
.clip .big { width: 54px; padding-top: 7px; }
.off { color: #aaa; }
.stack3 { padding-top: 4px; }
.stack3 button { height: 24px; width: 22px; }
.geo .stack { padding-left: 6px; width: 65px; }
.geo .stack + .stack { width: 36px; }
.geo .drop { margin-left: 4px; }
.mod .col2 { width: 43px; }
.tools { display: grid; grid-template: repeat(3, 24px) / repeat(5, 25px); padding: 4px 0 0 1px; align-content: start; }
.meas { flex-direction: column; padding-top: 4px; }
.meas button { height: 36px; gap: 6px; }
.fam { justify-content: space-between; padding: 0 4px; }
.fam .big { display: block; padding-top: 8px; }
.fam .big svg { margin: 0 auto 6px; }

.options { flex: none; height: 27px; background: #e0e2e5; }

.work { flex: 1; min-height: 0; display: flex; background: #f0f0f0; color: #222; }
.dock { flex: none; display: flex; flex-direction: column; margin-right: 4px; }
.dock header { flex: none; height: 20px; background: #bccbd9; display: flex; align-items: center; padding: 0 3px 0 2px; }
.dock h2 { flex: 1; white-space: nowrap; }
.browser { width: 150px; }
.tree-wrap { position: relative; flex: 1; background: #fff; border: 1px solid #808080; border-width: 1px 0 0 1px; padding-top: 2px; margin-top: 1px; overflow: hidden; }
.lines { position: absolute; left: 0; top: 2px; }
.tree { position: relative; list-style: none; display: grid; grid-template-rows: repeat(13, 1fr); height: 243px; white-space: nowrap; }
.tree li { padding-left: 28px; display: flex; align-items: center; }
.tree .l1 { padding-left: 31px; }
.tree .l2 { padding-left: 44px; }
.cur { background: #e2e2e2; line-height: 18px; padding-right: 2px; }
.hscroll { flex: none; height: 18px; display: flex; }
.hscroll button { width: 19px; }
.hscroll .thumb { width: 109px; }
.thumb { background: #cdcdcd; display: block; }
.props { width: 219px; }
.props-body { flex: 1; background: #fff; border: 1px solid #808080; border-width: 2px 0 0 1px; margin-top: 1px; }
.type { height: 70px; background: linear-gradient(#fff, #e4e4e4); display: flex; justify-content: space-between; align-items: center; padding: 0 2px 0 3px; }
.preview { background: linear-gradient(#eee, #d8d8d8); border: 1px solid #ddd; }
.filter { height: 23px; display: flex; background: #f2f2f2; }
.filter select { width: 145px; height: 22px; border: 1px solid #b4b4b4; background: #eee; font: inherit; color: #222; padding: 0; border-radius: 0; }
.edit { flex: 1; gap: 3px; color: #aaa; }
table { width: 100%; border-collapse: collapse; table-layout: fixed; }
tr { height: 20px; }
td, th { height: 20px; padding: 0; line-height: 18px; font-weight: normal; text-align: left; white-space: nowrap; border-bottom: 1px dotted #c4c4c4; }
td:first-child { width: 108px; padding-left: 7px; }
td + td { border-left: 1px dotted #c4c4c4; border-right: 1px dotted #c4c4c4; }
th { background: #dadada; padding-left: 1px; border: 0; }
th svg { float: right; margin: 2px 3px 0 0; fill: none; stroke: #222; }
.off td { color: #888; }
td input { display: block; }
td input[type=text] { width: 100%; height: 19px; border: 1px solid #333; padding: 0; }
td input[type=checkbox] { appearance: none; width: 9px; height: 9px; margin: 0 0 5px 2px; border: 1px solid #888; background: #fff; }
td input:checked::after { content: ""; display: block; width: 3px; height: 5px; margin: 0 0 0 2px; border: solid #222; border-width: 0 1px 1px 0; transform: rotate(40deg); }
.dock footer { flex: none; height: 25px; display: flex; justify-content: space-between; padding: 2px 2px 1px 1px; border-left: 1px solid #808080; }
.dock footer a { color: #2a7fd4; text-decoration: none; line-height: 25px; }
.dock footer button { width: 75px; border: 1px solid #ddd; color: #999; }

.view { flex: 1; min-width: 0; display: grid; grid-template: 1fr 19px / 1fr 18px; border: 1px solid #808080; border-width: 1px 0 0 1px; }
.canvas { position: relative; min-height: 0; overflow: hidden; background: linear-gradient(#f2f2f2, #a3a3a3); }
.scene { width: 100%; height: 100%; }
.planes path { fill: none; stroke: #9a6ba6; stroke-width: 1; stroke-dasharray: 12 12; }
.grid { fill: none; stroke: #43b6ec; }
.edge { fill: none; stroke: #3c3c3c; stroke-width: 5; stroke-linecap: round; }
.core { fill: none; stroke: #188fc4; stroke-dasharray: 10 8; }
.node { fill: #00b4ff; }
.viewwin { position: absolute; right: 1px; top: 4px; display: flex; }
.viewwin button { width: 12px; height: 10px; }
.viewwin svg { fill: none; stroke: #555; }
.cube { position: absolute; right: 17px; top: 50px; }
.cubetext { font: bold 9px Roboto, sans-serif; fill: #999; }
.cubetext .s { font-size: 6px; }
.cubetext .c { font-size: 9px; fill: #aaa; }
.navbar { position: absolute; right: 1px; top: 133px; }
.vscroll { display: flex; flex-direction: column; align-items: stretch; }
.vscroll button { height: 17px; }
.vscroll .thumb { height: 16px; width: 16px; margin: auto 0; }
.vcb { display: flex; background: #f0f0f0; }
.vcb button { width: 21px; }
.vcb .scale { width: 78px; }
.track { flex: 1; display: flex; padding: 2px 0 2px 338px; }
.track .thumb { width: 17px; }
.grip { display: flex; align-items: flex-end; justify-content: center; padding-bottom: 3px; }

.status { flex: none; height: 17px; display: flex; justify-content: space-between; background: linear-gradient(#e0e0e0, #c8c8c8); border-top: 1px solid #aaa; color: #222; }
.status p { padding-left: 1px; line-height: 18px; }
.toggles { display: flex; }
.toggles button { width: 17px; }
.toggles .filter-btn { width: 26px; margin-right: 51px; }
.filter-btn span { line-height: 12px; }
.corner { margin: 6px 1px 0 0; }
```
